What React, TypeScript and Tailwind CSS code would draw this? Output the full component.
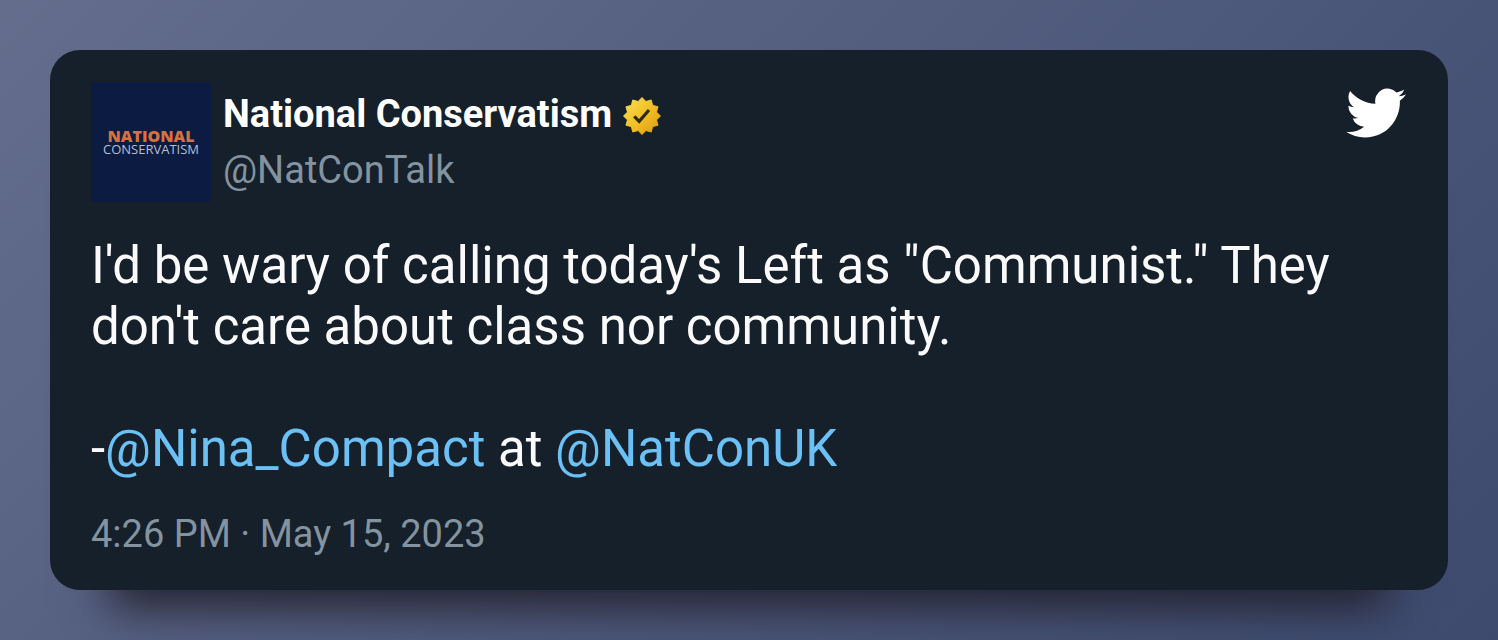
function VerifiedBadge() {
  const points = Array.from({ length: 24 }, (_, i) => {
    const r = i % 2 === 0 ? 18.5 : 15;
    const a = (i * Math.PI) / 12;
    return `${(20 + r * Math.sin(a)).toFixed(2)},${(20 - r * Math.cos(a)).toFixed(2)}`;
  }).join(" ");
  return (
    <svg viewBox="0 0 40 40" className="mt-1 size-10" role="img" aria-label="Verified organisation">
      <defs>
        <linearGradient id="gold" x1="0" y1="0" x2="1" y2="1">
          <stop offset="0.1" stopColor="#f8da4c" />
          <stop offset="0.55" stopColor="#f0bd22" />
          <stop offset="0.9" stopColor="#dfa018" />
        </linearGradient>
      </defs>
      <polygon points={points} fill="url(#gold)" stroke="url(#gold)" strokeLinejoin="round" />
      <path d="M12.2 20.4l5 5L27 14" fill="none" stroke="#2f2b12" strokeWidth="3.2" />
    </svg>
  );
}

function Bird() {
  return (
    <svg viewBox="0 2 24 20" className="h-[50px] w-[60px] fill-white" role="img" aria-label="Twitter">
      <path d="M23.953 4.57a10 10 0 01-2.825.775 4.958 4.958 0 002.163-2.723c-.951.555-2.005.959-3.127 1.184a4.92 4.92 0 00-8.384 4.482C7.69 8.095 4.067 6.13 1.64 3.162a4.822 4.822 0 00-.666 2.475c0 1.71.87 3.213 2.188 4.096a4.904 4.904 0 01-2.228-.616v.06a4.923 4.923 0 003.946 4.827 4.996 4.996 0 01-2.212.085 4.936 4.936 0 004.604 3.417 9.867 9.867 0 01-6.102 2.105c-.39 0-.779-.023-1.17-.067a13.995 13.995 0 007.557 2.209c9.053 0 13.998-7.496 13.998-13.985 0-.21 0-.42-.015-.63A9.935 9.935 0 0024 4.59z" />
    </svg>
  );
}

export default function App() {
  return (
    <main className="min-h-screen overflow-hidden bg-linear-135 from-[#646d8c] to-[#3d4a6e] p-[50px] font-['Roboto',sans-serif]">
      <article className="rounded-[30px] bg-[#16202a] pt-8 pr-[42px] pb-8 pl-[41px] shadow-[0_76px_44px_-60px_#211f2b]">
        <header className="flex items-start">
          <div className="flex size-[120px] flex-col items-center justify-center rounded-sm bg-[#0b1b42] text-center font-['Open_Sans',sans-serif]">
            <span className="text-base leading-[14px] font-extrabold text-[#d9703f]">NATIONAL</span>
            <span className="text-[13px] leading-[13px] text-[#b9bfd3]">CONSERVATISM</span>
          </div>
          <div className="ml-3 grow pt-1">
            <div className="flex items-center gap-2.5">
              <h1 className="text-[38px] leading-[56px] font-bold text-white">National Conservatism</h1>
              <VerifiedBadge />
            </div>
            <a href="#profile" className="block text-[38px] leading-[56px] text-[#8393a0]">@NatConTalk</a>
          </div>
          <div className="pt-1.5">
            <Bird />
          </div>
        </header>
        <div className="mt-[33px] text-[51px] leading-[61px] text-[#fafafa]">
          <p>I'd be wary of calling today's Left as "Communist." They don't care about class nor community.</p>
          <p className="mt-[61px]">
            -<a href="#nina" className="text-[#6bc1f5]">@Nina_Compact</a> at{" "}
            <a href="#natconuk" className="text-[#6bc1f5]">@NatConUK</a>
          </p>
        </div>
        <time dateTime="2023-05-15T16:26" className="mt-[31px] block text-[38px] leading-[48px] text-[#8393a0]">
          4:26 PM · May 15, 2023
        </time>
      </article>
    </main>
  );
}
